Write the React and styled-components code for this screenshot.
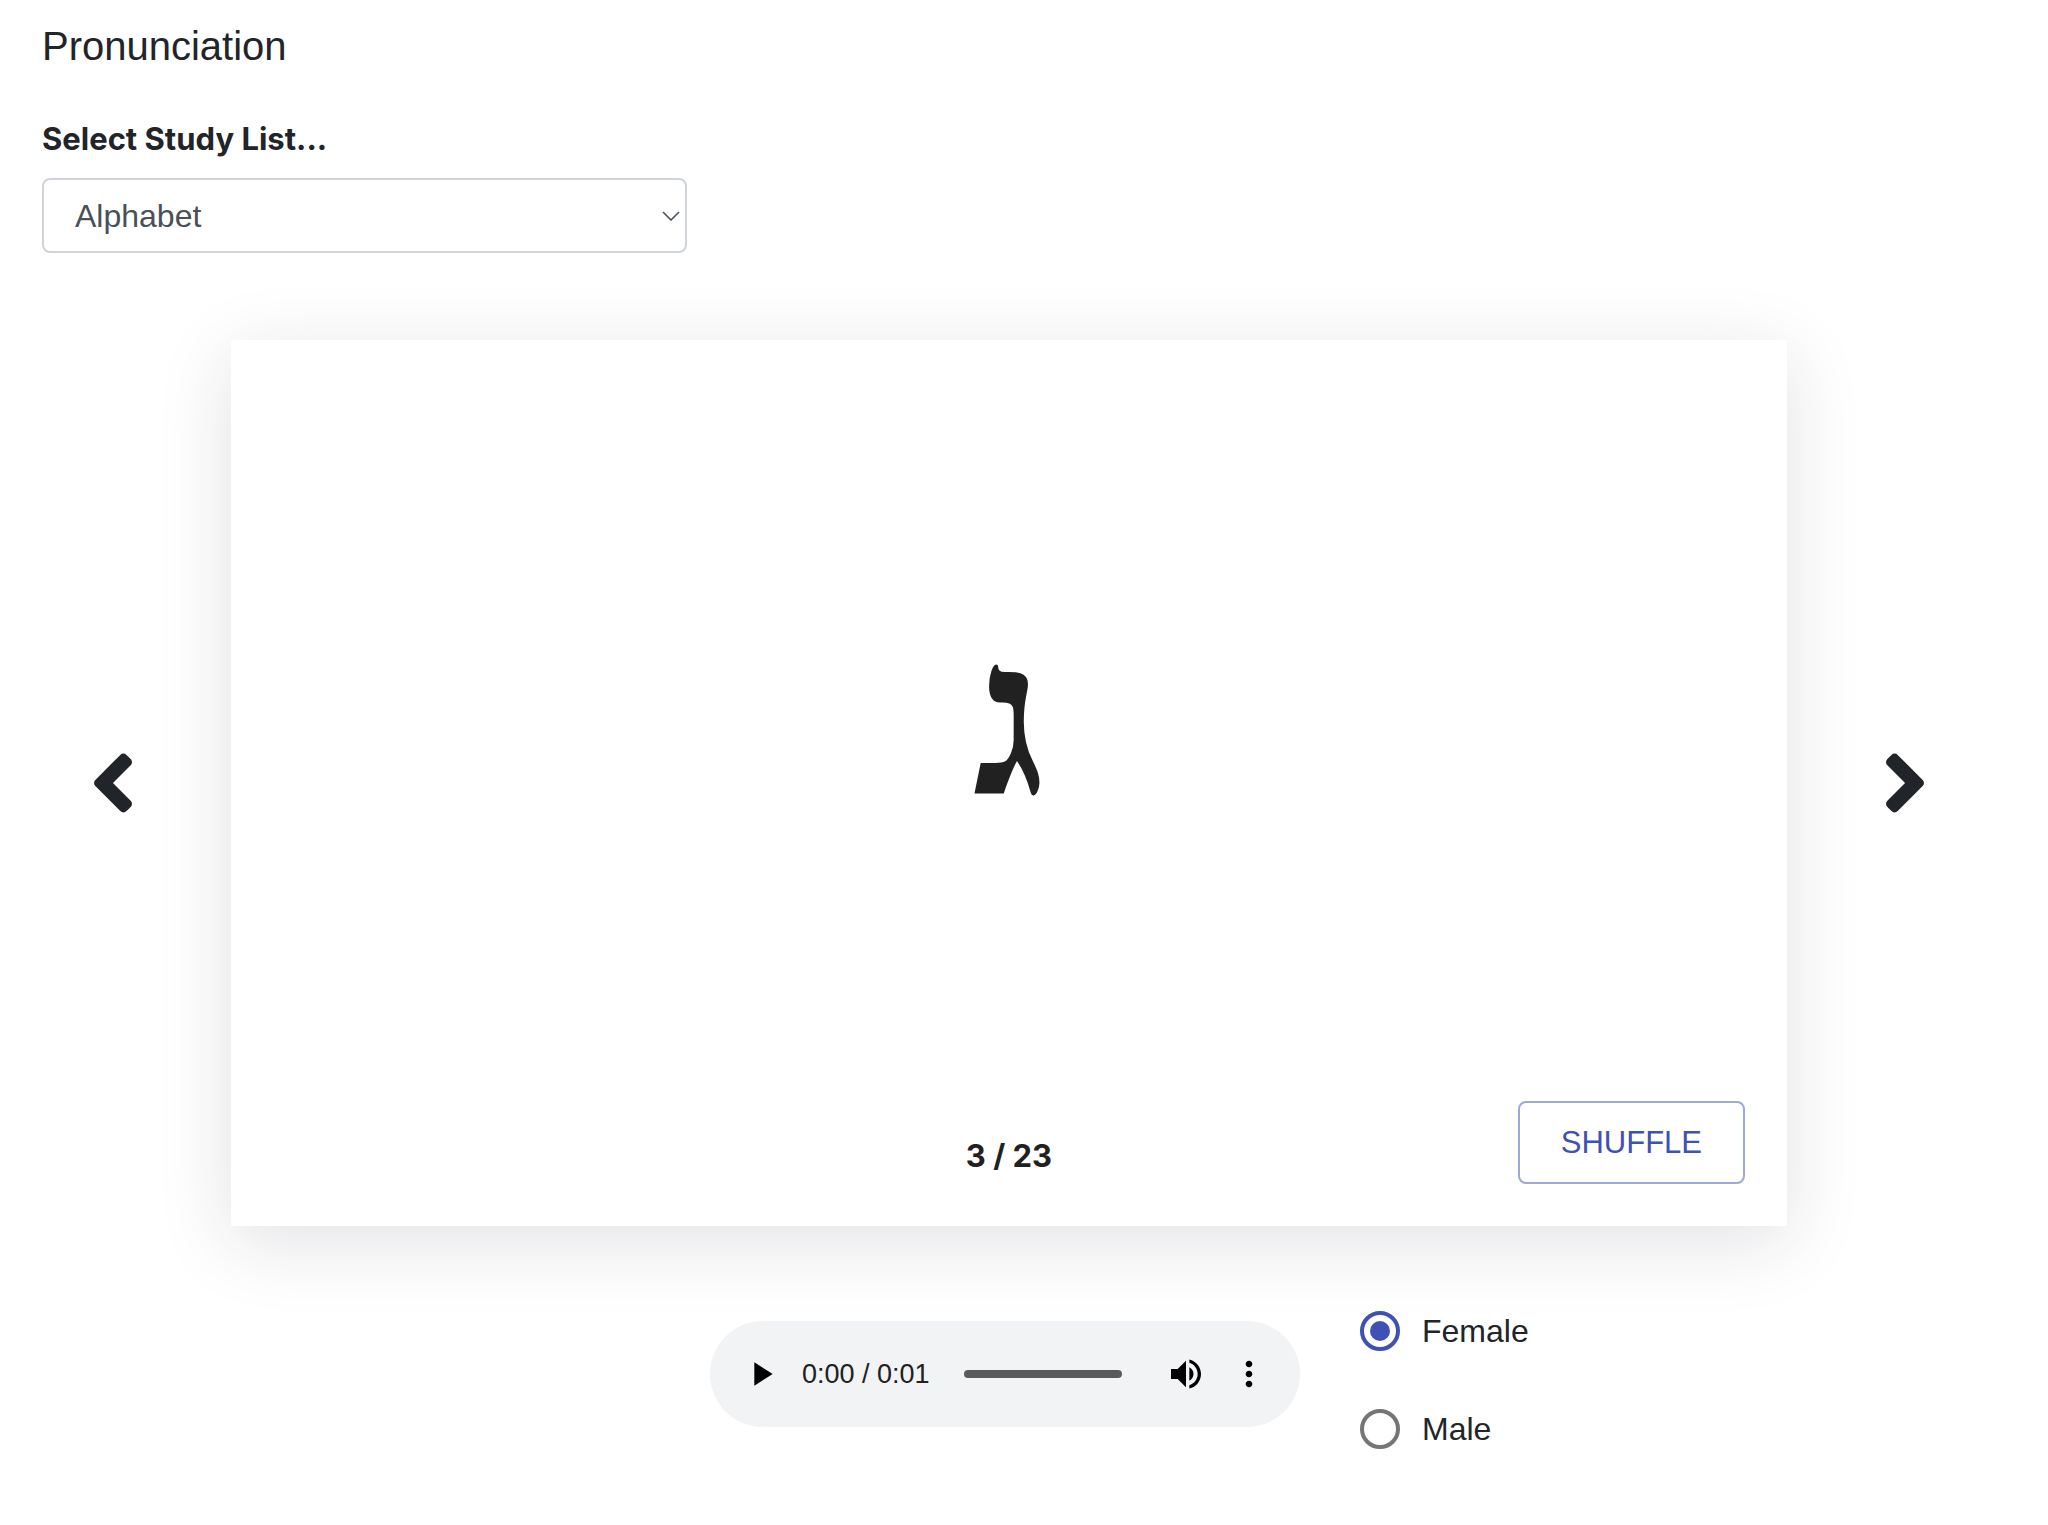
import React, { useState } from 'react';
import styled, { createGlobalStyle } from 'styled-components';
import { FaAngleLeft, FaAngleRight } from 'react-icons/fa';

const sans = '"Helvetica Neue", "Liberation Sans", Arial, sans-serif';
const system = 'Inter, "Liberation Sans", sans-serif';

const GlobalStyle = createGlobalStyle`
  *, *::before, *::after { box-sizing: border-box; }
  body {
    margin: 0;
    background: #fff;
    color: #212529;
    font-family: ${sans};
    font-size: 32px;
    line-height: 48px;
  }
  button, select, input { font-family: inherit; margin: 0; }
`;

const Page = styled.main`
  padding: 22px 72px 48px 42px;
`;

const Title = styled.h1`
  margin: 0 0 45px;
  font-size: 40px;
  font-weight: 400;
  line-height: 48px;
`;

const Field = styled.div`
  display: grid;
  gap: 15px;
  width: calc(100% / 3);
`;

const FieldLabel = styled.label`
  font-family: ${system};
  font-size: 31px;
  font-weight: 700;
`;

const SelectBox = styled.div`
  display: grid;
  align-items: center;
  & > * { grid-area: 1 / 1; }
`;

const Select = styled.select`
  appearance: none;
  width: 100%;
  height: 75px;
  padding: 0 48px 0 31px;
  border: 2px solid #ced4da;
  border-radius: 8px;
  background: #fff;
  color: #495057;
  font-size: 32px;
`;

const Caret = styled.svg`
  justify-self: end;
  width: 18px;
  height: 10px;
  margin-right: 7px;
  pointer-events: none;
`;

const Deck = styled.section`
  display: grid;
  grid-template-columns: 142px minmax(0, 1fr) 142px;
  gap: 47px;
  align-items: center;
  margin-top: 87px;
`;

const ArrowButton = styled.button`
  display: flex;
  align-items: center;
  justify-content: center;
  padding: 0;
  border: 0;
  background: none;
  color: #212529;
  font-size: 94px;
  cursor: pointer;
`;

const Card = styled.article`
  display: grid;
  grid-template-rows: 1fr auto;
  min-height: 886px;
  padding: 42px;
  background: #fff;
  color: #212121;
  box-shadow: 0 16px 70px rgba(34, 34, 51, 0.13);
`;

const Letter = styled.p`
  align-self: center;
  margin: 0;
  padding-bottom: 44px;
  text-align: center;
  font-family: "Liberation Serif", "Times New Roman", serif;
  font-size: 220px;
  font-weight: 700;
  line-height: 264px;
`;

const CardFooter = styled.footer`
  display: grid;
  grid-template-columns: 1fr auto 1fr;
  align-items: end;
`;

const Counter = styled.span`
  grid-column: 2;
  font-family: ${system};
  font-size: 31px;
  font-weight: 700;
  line-height: 56px;
`;

const ShuffleButton = styled.button`
  justify-self: end;
  height: 83px;
  padding: 0 41px;
  border: 2px solid rgba(63, 81, 181, 0.5);
  border-radius: 8px;
  background: none;
  color: #3f51b5;
  font-size: 31px;
  cursor: pointer;
`;

const Playback = styled.section`
  display: grid;
  grid-template-columns: 1fr 590px 1fr;
  column-gap: 60px;
  align-items: start;
  margin-top: 56px;
  padding-right: 8px;
`;

const Player = styled.div`
  grid-column: 2;
  display: flex;
  align-items: center;
  height: 106px;
  margin-top: 39px;
  padding: 0 31px;
  border-radius: 53px;
  background: #f1f3f4;
`;

const IconButton = styled.button`
  flex: none;
  display: flex;
  padding: 0;
  border: 0;
  background: none;
  color: #000;
  cursor: pointer;
`;

const Icon = styled.svg`
  width: 40px;
  height: 40px;
  fill: currentColor;
`;

const Time = styled.span`
  margin-left: 21px;
  font-size: 27px;
  white-space: nowrap;
  color: #212121;
`;

const Seek = styled.input`
  appearance: none;
  flex: 1;
  min-width: 0;
  height: 8px;
  margin: 0 44px 0 34px;
  border-radius: 4px;
  background: #5a5a5a;
  &::-webkit-slider-thumb { appearance: none; width: 0; height: 0; }
`;

const MenuButton = styled(IconButton)`
  margin-left: 23px;
`;

const Voices = styled.fieldset`
  margin: 0;
  padding: 0;
  border: 0;
`;

const Voice = styled.label`
  display: flex;
  align-items: center;
  gap: 22px;
  height: 98px;
  cursor: pointer;
`;

const Radio = styled.input`
  appearance: none;
  display: grid;
  place-items: center;
  width: 40px;
  height: 40px;
  border: 4px solid #757575;
  border-radius: 50%;
  &:checked { border-color: #3f51b5; }
  &:checked::before {
    content: '';
    width: 20px;
    height: 20px;
    border-radius: 50%;
    background: #3f51b5;
  }
`;

const voices = ['Female', 'Male'];

export default function App() {
  const [voice, setVoice] = useState('Female');

  return (
    <>
      <GlobalStyle />
      <Page>
        <Title>Pronunciation</Title>
        <Field>
          <FieldLabel htmlFor="study-list">Select Study List...</FieldLabel>
          <SelectBox>
            <Select id="study-list" defaultValue="alphabet">
              <option value="alphabet">Alphabet</option>
            </Select>
            <Caret viewBox="0 0 18 10" aria-hidden="true">
              <path d="M1 1l8 8 8-8" fill="none" stroke="#495057" strokeWidth="1.6" />
            </Caret>
          </SelectBox>
        </Field>

        <Deck>
          <ArrowButton type="button" aria-label="Previous">
            <FaAngleLeft />
          </ArrowButton>
          <Card>
            <Letter lang="he">ג</Letter>
            <CardFooter>
              <Counter>3 / 23</Counter>
              <ShuffleButton type="button">SHUFFLE</ShuffleButton>
            </CardFooter>
          </Card>
          <ArrowButton type="button" aria-label="Next">
            <FaAngleRight />
          </ArrowButton>
        </Deck>

        <Playback>
          <Player>
            <IconButton type="button" aria-label="Play">
              <Icon viewBox="0 0 24 24"><path d="M8 5v14l11-7z" /></Icon>
            </IconButton>
            <Time>0:00 / 0:01</Time>
            <Seek type="range" min="0" max="100" defaultValue="0" aria-label="Seek" />
            <IconButton type="button" aria-label="Mute">
              <Icon viewBox="0 0 24 24">
                <path d="M3 9v6h4l5 5V4L7 9H3zm13.5 3c0-1.77-1.02-3.29-2.5-4.03v8.05c1.48-.73 2.5-2.25 2.5-4.02zM14 3.23v2.06c2.89.86 5 3.54 5 6.71s-2.11 5.85-5 6.71v2.06c4.01-.91 7-4.49 7-8.77s-2.99-7.86-7-8.77z" />
              </Icon>
            </IconButton>
            <MenuButton type="button" aria-label="More options">
              <Icon viewBox="0 0 24 24">
                <path d="M12 8c1.1 0 2-.9 2-2s-.9-2-2-2-2 .9-2 2 .9 2 2 2zm0 2c-1.1 0-2 .9-2 2s.9 2 2 2 2-.9 2-2-.9-2-2-2zm0 6c-1.1 0-2 .9-2 2s.9 2 2 2 2-.9 2-2-.9-2-2-2z" />
              </Icon>
            </MenuButton>
          </Player>
          <Voices>
            {voices.map((name) => (
              <Voice key={name}>
                <Radio
                  type="radio"
                  name="voice"
                  value={name}
                  checked={voice === name}
                  onChange={() => setVoice(name)}
                />
                {name}
              </Voice>
            ))}
          </Voices>
        </Playback>
      </Page>
    </>
  );
}
